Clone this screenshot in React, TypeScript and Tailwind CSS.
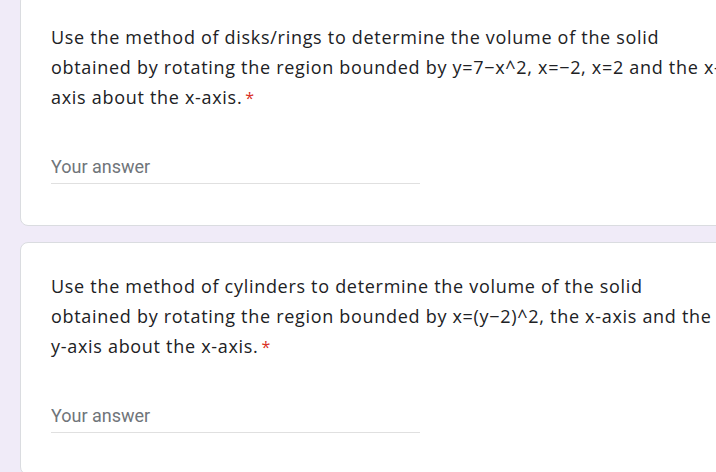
const questions = [
  {
    lines: [
      'Use the method of disks/rings to determine the volume of the solid',
      'obtained by rotating the region bounded by y=7−x^2, x=−2, x=2 and the x-',
      'axis about the x-axis.',
    ],
  },
  {
    lines: [
      'Use the method of cylinders to determine the volume of the solid',
      'obtained by rotating the region bounded by x=(y−2)^2, the x-axis and the',
      'y-axis about the x-axis.',
    ],
  },
]

function QuestionCard({ lines }: { lines: string[] }) {
  return (
    <div className="w-[780px] shrink-0 rounded-[8px] border border-[#dadce0] bg-white pl-[30px] pt-[28px] pb-[41px]">
      <div
        className="text-[18px] leading-[30px] tracking-[0.7px] text-[#202124]"
        style={{ fontFamily: '"Open Sans", "Noto Sans", sans-serif' }}
      >
        {lines.map((line, i) => (
          <div key={i} className="whitespace-nowrap">
            {line}
            {i === lines.length - 1 && <span className="ml-[3px] text-[16px] text-[#d93025]">*</span>}
          </div>
        ))}
      </div>

      {/* Short answer field */}
      <div className="mt-[38px] w-[369px] border-b border-[#e0e0e0] pb-[2px]">
        <input
          type="text"
          placeholder="Your answer"
          className="block h-[30px] w-full bg-transparent text-[18px] text-[#202124] outline-none placeholder:text-[#70757a]"
          style={{ fontFamily: 'Roboto, Arial, sans-serif' }}
        />
      </div>
    </div>
  )
}

export default function App() {
  return (
    <div className="h-screen w-full overflow-hidden bg-[#f0ebf8]">
      <div className="-mt-[7px] flex flex-col gap-[16px] pl-[20px]">
        {questions.map((q, i) => (
          <QuestionCard key={i} lines={q.lines} />
        ))}
      </div>
    </div>
  )
}
